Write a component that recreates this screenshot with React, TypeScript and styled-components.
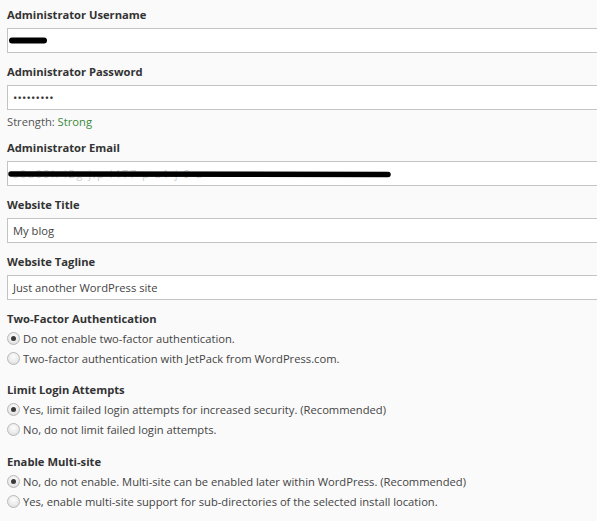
import React from "react";
import styled, { createGlobalStyle } from "styled-components";

const Global = createGlobalStyle`
  html, body { margin: 0; padding: 0; background: #fafafa; overflow: hidden; }
  body { font-family: "Open Sans", "Liberation Sans", sans-serif; }
`;

const Form = styled.div`
  padding: 6px 0 0 7px;
  width: 600px;
  display: flex;
  flex-direction: column;
`;

const Group = styled.div`
  display: flex;
  flex-direction: column;
  margin-bottom: ${(p: { $mb?: number }) => (p.$mb ?? 10)}px;
`;

const Label = styled.div`
  font-size: 11.2px;
  font-weight: 700;
  line-height: 18px;
  color: #333;
  margin-bottom: ${(p: { $mb?: number }) => (p.$mb ?? 4)}px;
`;

const Field = styled.div`
  position: relative;
  box-sizing: border-box;
  height: 25px;
  width: 600px;
  background: #fff;
  border: 1px solid #c4c4c4;
  padding: 0 5px;
  display: flex;
  align-items: center;
  font-size: 11.2px;
  color: #444;
`;

const Dots = styled.span`
  font-size: 11.5px;
  letter-spacing: 0.2px;
  color: #333;
`;

const Faint = styled.span`
  color: #cfcfcf;
  font-size: 11.2px;
  letter-spacing: 1.5px;
`;

const Redact = styled.svg`
  position: absolute;
  left: 0;
  top: 0;
`;

const Strength = styled.div`
  font-size: 11.2px;
  line-height: 17px;
  color: #555;
  margin-top: 3px;
`;

const Strong = styled.span`
  color: #3c8a3c;
`;

const Option = styled.label`
  display: flex;
  align-items: center;
  height: 20.5px;
  font-size: 11.2px;
  color: #444;
  gap: 3px;
`;

const Radio = styled.span<{ $checked?: boolean }>`
  box-sizing: border-box;
  width: 13px;
  height: 13px;
  border-radius: 50%;
  border: 1px solid #b8b8b8;
  background: radial-gradient(circle at 50% 35%, #fdfdfd 0%, #ebebeb 55%, #d6d6d6 100%);
  display: flex;
  align-items: center;
  justify-content: center;
  flex: none;
  &::after {
    content: "";
    display: ${(p) => (p.$checked ? "block" : "none")};
    width: 5px;
    height: 5px;
    border-radius: 50%;
    background: #3a3a3a;
  }
`;

type Opt = { text: string; checked?: boolean };

const RadioGroup = ({ title, options, mb }: { title: string; options: Opt[]; mb?: number }) => (
  <Group $mb={mb}>
    <Label $mb={0}>{title}</Label>
    {options.map((o) => (
      <Option key={o.text}>
        <Radio $checked={o.checked} />
        {o.text}
      </Option>
    ))}
  </Group>
);

export default function App() {
  return (
    <>
      <Global />
      <Form>
        <Group>
          <Label>Administrator Username</Label>
          <Field>
            <Redact width="60" height="23" viewBox="0 0 60 23">
              <path d="M4 11.5 L36 11.5" stroke="#000" strokeWidth="6" strokeLinecap="round" />
            </Redact>
          </Field>
        </Group>
        <Group $mb={9}>
          <Label>Administrator Password</Label>
          <Field>
            <Dots>•••••••••</Dots>
          </Field>
          <Strength>
            Strength: <Strong>Strong</Strong>
          </Strength>
        </Group>
        <Group>
          <Label>Administrator Email</Label>
          <Field>
            <Faint>s0a09h i2g&#183;j.p l4T7 p a1 j 9 a</Faint>
            <Redact width="400" height="23" viewBox="0 0 400 23">
              <path d="M3 12 L380 12.5" stroke="#000" strokeWidth="5.5" strokeLinecap="round" />
            </Redact>
          </Field>
        </Group>
        <Group>
          <Label>Website Title</Label>
          <Field>My blog</Field>
        </Group>
        <Group>
          <Label>Website Tagline</Label>
          <Field>Just another WordPress site</Field>
        </Group>
        <RadioGroup
          title="Two-Factor Authentication"
          mb={12}
          options={[
            { text: "Do not enable two-factor authentication.", checked: true },
            { text: "Two-factor authentication with JetPack from WordPress.com." },
          ]}
        />
        <RadioGroup
          title="Limit Login Attempts"
          mb={13}
          options={[
            { text: "Yes, limit failed login attempts for increased security. (Recommended)", checked: true },
            { text: "No, do not limit failed login attempts." },
          ]}
        />
        <RadioGroup
          title="Enable Multi-site"
          options={[
            { text: "No, do not enable. Multi-site can be enabled later within WordPress. (Recommended)", checked: true },
            { text: "Yes, enable multi-site support for sub-directories of the selected install location." },
          ]}
        />
      </Form>
    </>
  );
}
